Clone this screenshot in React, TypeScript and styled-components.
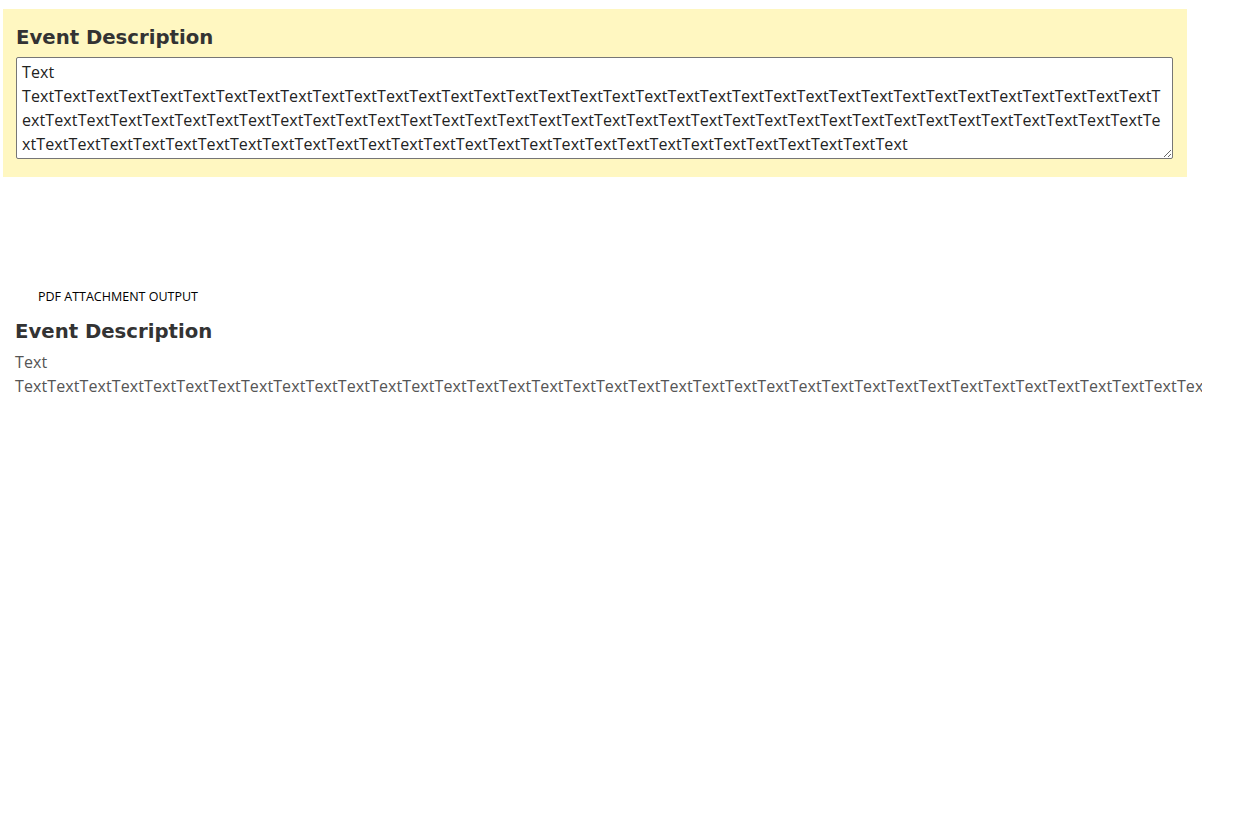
import React from 'react';
import styled, {createGlobalStyle} from "styled-components";

const longText = 'Text\n' + 'Text'.repeat(98);

export default function App() {
    return (
        <>
            <GlobalStyle/>
            <EditorPanel>
                <SectionTitle>Event Description</SectionTitle>
                <DescriptionInput defaultValue={longText}/>
            </EditorPanel>

            <PdfOutput>
                <OutputLabel>PDF ATTACHMENT OUTPUT</OutputLabel>
                <SectionTitle $indent={15}>Event Description</SectionTitle>
                <DescriptionText>{longText}</DescriptionText>
            </PdfOutput>
        </>
    );
}

const GlobalStyle = createGlobalStyle`
    body {
        margin: 0;
        background: #ffffff;
        font-family: "Open Sans", "Liberation Sans", sans-serif;
    }
`

const EditorPanel = styled.section`
    box-sizing: border-box;
    width: 1184px;
    margin: 9px 0 0 3px;
    padding: 16px 14px 18px 13px;
    background-color: #fff7c1;
    display: flex;
    flex-direction: column;
    gap: 6px;
`

const SectionTitle = styled.h2<{ $indent?: number }>`
    margin: 0 0 0 ${p => p.$indent ?? 0}px;
    font-family: "DejaVu Sans", Verdana, sans-serif;
    font-weight: bold;
    font-size: 19.7px;
    line-height: 26px;
    color: #333333;
`

const DescriptionInput = styled.textarea`
    box-sizing: border-box;
    width: 100%;
    height: 102px;
    margin: 0;
    padding: 2px 5px;
    border: 1px solid #767676;
    border-radius: 2px;
    font-family: "Open Sans", sans-serif;
    font-size: 16px;
    letter-spacing: 0.1px;
    line-height: 24px;
    color: #222222;
    background: #ffffff;
    overflow: hidden;
    resize: vertical;
`

const PdfOutput = styled.section`
    margin-top: 111px;
    width: 1202px;
    overflow: hidden;
`

const OutputLabel = styled.div`
    margin: 0 0 13px 38px;
    font-family: "Open Sans", sans-serif;
    font-size: 12.5px;
    line-height: 18px;
    color: #000000;
`

const DescriptionText = styled.div`
    margin-top: 5px;
    padding-left: 15px;
    font-family: "Open Sans", sans-serif;
    font-size: 16px;
    letter-spacing: 0.1px;
    line-height: 24px;
    color: #555555;
    white-space: pre;
`
